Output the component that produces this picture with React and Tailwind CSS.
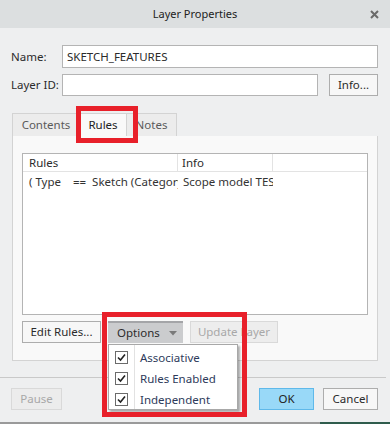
import React from "react";

function Check() {
  return (
    <span className="flex items-center justify-center w-[13px] h-[13px] border border-[#6b6b6b] bg-white">
      <svg width="9" height="9" viewBox="0 0 9 9">
        <path d="M1 4.5 L3.5 7 L8 1.5" fill="none" stroke="#222" strokeWidth="1.6" />
      </svg>
    </span>
  );
}

export default function App() {
  const menuItems = ["Associative", "Rules Enabled", "Independent"];

  return (
    <div className="relative w-[390px] h-[424px] overflow-hidden bg-[#eeeff0] font-['Noto_Sans',sans-serif] text-[11.5px] text-[#2b2b2b]">
      {/* Title bar */}
      <div className="relative flex items-center justify-center h-[28px] bg-[#dcdfe0]">
        <span className="text-[#222] text-[11px]">Layer Properties</span>
        <svg className="absolute right-[11px] top-[10px]" width="9" height="9" viewBox="0 0 9 9">
          <path d="M1 1 L8 8 M8 1 L1 8" stroke="#6a6a6a" strokeWidth="2" />
        </svg>
      </div>

      {/* Fields */}
      <div className="flex flex-col gap-[6px] pl-[11px] pr-[12px] pt-[17px]">
        <div className="flex items-center">
          <span className="w-[51px]">Name:</span>
          <div className="flex items-center flex-1 h-[23px] px-[4px] bg-white border border-[#b4b4b4]">
            SKETCH_FEATURES
          </div>
        </div>
        <div className="flex items-center">
          <span className="w-[51px]">Layer ID:</span>
          <div className="w-[256px] h-[22px] bg-white border border-[#b4b4b4]"></div>
          <button className="ml-[11px] w-[49px] h-[22px] bg-[#f7f7f7] border border-[#adadad]">
            Info...
          </button>
        </div>
      </div>

      {/* Tabs */}
      <div className="flex mt-[17px] ml-[12px] h-[23px]">
        <div className="flex items-center justify-center w-[68px] bg-[#ececec] border border-[#d3d3d3] border-b-0 text-[#5a5a5a]">
          Contents
        </div>
        <div className="flex items-center justify-center w-[47px] bg-[#f9f9f9] border-t border-r border-[#d3d3d3] text-[#222]">
          Rules
        </div>
        <div className="flex items-center justify-center w-[50px] bg-[#ececec] border-t border-r border-[#d3d3d3] text-[#5a5a5a]">
          Notes
        </div>
      </div>

      {/* Panel */}
      <div className="ml-[12px] w-[366px] h-[225px] bg-[#f9f9f9] border border-t-0 border-[#d3d3d3] px-[9px] pt-[17px]">
        <div className="h-[162px] bg-white border border-[#b4b4b4]">
          <div className="flex h-[18px] border-b border-[#e3e3e3]">
            <div className="w-[155px] pl-[6px] border-r border-[#e3e3e3] leading-[18px]">Rules</div>
            <div className="w-[95px] pl-[4px] border-r border-[#e3e3e3] leading-[18px]">Info</div>
          </div>
          <div className="flex h-[20px] leading-[20px] text-[#333]">
            <div className="w-[155px] pl-[6px] overflow-hidden whitespace-nowrap">( Type&nbsp;&nbsp;&nbsp;&nbsp;==&nbsp;&nbsp;Sketch (Category</div>
            <div className="w-[95px] pl-[5px] overflow-hidden whitespace-nowrap">Scope model TEST</div>
          </div>
        </div>
        <div className="flex gap-[7px] mt-[6px]">
          <button className="w-[79px] h-[22px] bg-[#f7f7f7] border border-[#adadad]">Edit Rules...</button>
          <button className="relative w-[75px] h-[22px] bg-[#cbccce] border-t-2 border-[#a4a5a8] text-left pl-[9px]">
            Options
            <svg className="absolute right-[6px] top-[8px]" width="8" height="5" viewBox="0 0 8 5">
              <path d="M0 0 L8 0 L4 4.5 Z" fill="#7a7a7a" />
            </svg>
          </button>
          <button className="w-[88px] h-[22px] bg-[#ededed] border border-[#d9d9d9] text-[#a8a8a8]">Update Layer</button>
        </div>
      </div>

      {/* Separator */}
      <div className="mt-[16px] h-px bg-[#c9c9c9] mr-[4px]"></div>

      {/* Bottom buttons */}
      <div className="flex items-center pl-[11px] pr-[12px] mt-[10px]">
        <button className="w-[51px] h-[22px] bg-[#ececec] border border-[#d9d9d9] text-[#a8a8a8]">Pause</button>
        <div className="flex-1"></div>
        <button className="w-[55px] h-[22px] bg-[#99d9f8] border border-[#5fb9ea] text-[#222]">OK</button>
        <button className="ml-[9px] w-[55px] h-[22px] bg-[#f7f7f7] border border-[#adadad]">Cancel</button>
      </div>

      {/* Options dropdown menu */}
      <div className="absolute left-[108px] top-[344px] w-[130px] h-[66px] bg-white border border-[#a8a8a8] shadow-[2px_2px_2px_rgba(0,0,0,0.3)]">
        <div className="absolute left-[25px] top-0 bottom-0 w-px bg-[#e2e2e2]"></div>
        <div className="flex flex-col pt-[2px]">
          {menuItems.map((item) => (
            <div key={item} className="flex items-center h-[21px]">
              <div className="flex justify-center w-[25px]">
                <Check />
              </div>
              <span className="pl-[6px] text-[#2d3a5a]">{item}</span>
            </div>
          ))}
        </div>
      </div>

      {/* Annotation boxes */}
      <div className="absolute left-[76px] top-[106px] w-[62px] h-[37px] border-[5px] border-[#e8202a]"></div>
      <div className="absolute left-[102px] top-[312px] w-[145px] h-[105px] border-[5px] border-[#e8202a]"></div>

      {/* bottom edge */}
      <div className="absolute left-0 right-0 bottom-0 flex h-[2px]">
        <div className="w-[320px] bg-[#9a9a9a]"></div>
        <div className="flex-1 bg-[#2f5c4c]"></div>
      </div>
    </div>
  );
}
